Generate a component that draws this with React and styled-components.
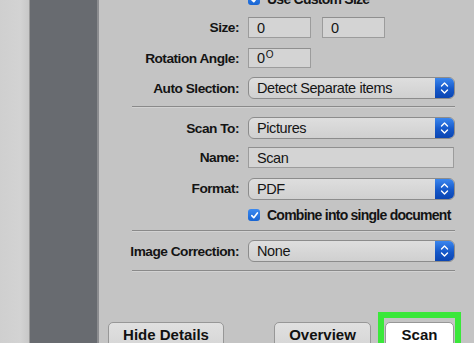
import React from "react";
import styled, { createGlobalStyle } from "styled-components";

const Global = createGlobalStyle`
  html, body { margin: 0; padding: 0; }
  body { font-family: "Liberation Sans", Arial, sans-serif; background: #c4c4c4; }
`;

const Screen = styled.div`
  display: flex;
  width: 474px;
  height: 343px;
  overflow: hidden;
`;

const LightStrip = styled.div`
  width: 29px;
  background: linear-gradient(to right, #cfcfcf, #d3d3d3 70%, #c8c8c8);
  border-right: 1px solid #9a9a9a;
`;

const DarkStrip = styled.div`
  width: 67px;
  background: #686b70;
  border-right: 2px solid #8c8d90;
`;

const Panel = styled.div`
  flex: 1;
  background: #c4c4c4;
  display: flex;
  flex-direction: column;
`;

const Form = styled.div`
  display: flex;
  flex-direction: column;
  margin-top: -7px;
`;

const Row = styled.div`
  display: flex;
  align-items: center;
  height: ${(p) => p.$h || 21}px;
  margin-top: ${(p) => p.$top || 0}px;
`;

const Label = styled.div`
  width: 140px;
  text-align: right;
  font-weight: bold;
  font-size: 13.7px;
  letter-spacing: -0.5px;
  color: #141414;
  margin-right: 9px;
  white-space: nowrap;
`;

const Field = styled.div`
  box-sizing: border-box;
  width: ${(p) => p.$w}px;
  height: ${(p) => p.$h || 21}px;
  margin-right: ${(p) => p.$mr || 0}px;
  background: #d4d4d4;
  border: 1px solid #9c9c9c;
  border-top-color: #8f8f8f;
  display: flex;
  align-items: center;
  padding-left: 8px;
  font-size: 14.5px;
  letter-spacing: -0.4px;
  color: #151515;
`;

const Sup = styled.span`
  font-size: 10px;
  position: relative;
  top: -4px;
  margin-left: 1px;
`;

const SelectBox = styled.div`
  box-sizing: border-box;
  width: 207px;
  height: 22px;
  border: 1px solid #8c8c8c;
  border-radius: 6px;
  background: linear-gradient(#dedede, #d0d0d0);
  display: flex;
  align-items: center;
  font-size: 14.5px;
  letter-spacing: -0.4px;
  color: #151515;
  overflow: hidden;
`;

const SelectText = styled.div`
  flex: 1;
  padding-left: 8px;
`;

const Stepper = styled.div`
  width: 19px;
  height: 100%;
  background: linear-gradient(#3a86ee, #1558c9 55%, #0b45b2);
  display: flex;
  align-items: center;
  justify-content: center;
`;

const Separator = styled.div`
  margin-left: 33px;
  width: 323px;
  height: 1px;
  background: #8a8a8a;
  border-bottom: 1px solid #d2d2d2;
  margin-top: ${(p) => p.$top || 0}px;
`;

const CheckRow = styled.div`
  display: flex;
  align-items: center;
  height: 12px;
  margin-left: 149px;
  margin-top: ${(p) => p.$top || 0}px;
`;

const CheckBox = styled.div`
  width: 12px;
  height: 12px;
  border-radius: 3px;
  background: linear-gradient(#3c8af0, #1764d2);
  display: flex;
  align-items: center;
  justify-content: center;
  margin-right: 7px;
`;

const CheckText = styled.div`
  font-weight: bold;
  font-size: 14px;
  letter-spacing: -0.75px;
  color: #141414;
  white-space: nowrap;
`;

const Footer = styled.div`
  display: flex;
  align-items: flex-start;
  margin-top: 50px;
  padding-left: 9px;
`;

const Button = styled.div`
  box-sizing: border-box;
  width: ${(p) => p.$w}px;
  height: 26px;
  margin-left: ${(p) => p.$ml || 0}px;
  border: 1px solid #979797;
  border-radius: 5px;
  background: ${(p) => (p.$primary ? "#ffffff" : "linear-gradient(#e0e0e0, #d6d6d6)")};
  display: flex;
  justify-content: center;
  padding-top: 3px;
  font-weight: bold;
  font-size: 15px;
  color: #111;
`;

const Highlight = styled.div`
  margin-left: 7px;
  margin-top: -10px;
  border: 6px solid #3ae83a;
  border-bottom: none;
  padding: 4px 1px 0 1px;
  background: #c4c4c4;
`;

const Check = () => (
  <svg width="9" height="9" viewBox="0 0 10 10">
    <path d="M2 5.2 L4.2 7.5 L8.2 2.2" fill="none" stroke="#fff" strokeWidth="1.8" strokeLinecap="round" strokeLinejoin="round" />
  </svg>
);

const Chevrons = () => (
  <svg width="9" height="14" viewBox="0 0 9 14">
    <path d="M1.5 5 L4.5 2 L7.5 5 M1.5 9 L4.5 12 L7.5 9" fill="none" stroke="#fff" strokeWidth="1.4" strokeLinecap="round" strokeLinejoin="round" />
  </svg>
);

const Select = ({ value }) => (
  <SelectBox>
    <SelectText>{value}</SelectText>
    <Stepper>
      <Chevrons />
    </Stepper>
  </SelectBox>
);

export default function App() {
  return (
    <>
      <Global />
      <Screen>
        <LightStrip />
        <DarkStrip />
        <Panel>
          <Form>
            <CheckRow>
              <CheckBox>
                <Check />
              </CheckBox>
              <CheckText>Use Custom Size</CheckText>
            </CheckRow>
            <Row $top={12} $h={21}>
              <Label>Size:</Label>
              <Field $w={63} $mr={11}>0</Field>
              <Field $w={63}>0</Field>
            </Row>
            <Row $top={10} $h={20}>
              <Label>Rotation Angle:</Label>
              <Field $w={63} $h={20}>
                0<Sup>O</Sup>
              </Field>
            </Row>
            <Row $top={9} $h={22}>
              <Label>Auto Slection:</Label>
              <Select value="Detect Separate items" />
            </Row>
            <Separator $top={7} />
            <Row $top={9} $h={22}>
              <Label>Scan To:</Label>
              <Select value="Pictures" />
            </Row>
            <Row $top={8} $h={21}>
              <Label>Name:</Label>
              <Field $w={206}>Scan</Field>
            </Row>
            <Row $top={10} $h={21}>
              <Label>Format:</Label>
              <Select value="PDF" />
            </Row>
            <CheckRow $top={10}>
              <CheckBox>
                <Check />
              </CheckBox>
              <CheckText>Combine into single document</CheckText>
            </CheckRow>
            <Separator $top={9} />
            <Row $top={8} $h={22}>
              <Label>Image Correction:</Label>
              <Select value="None" />
            </Row>
            <Separator $top={8} />
          </Form>
          <Footer>
            <Button $w={116}>Hide Details</Button>
            <Button $w={97} $ml={50}>Overview</Button>
            <Highlight>
              <Button $w={69} $primary>
                Scan
              </Button>
            </Highlight>
          </Footer>
        </Panel>
      </Screen>
    </>
  );
}
